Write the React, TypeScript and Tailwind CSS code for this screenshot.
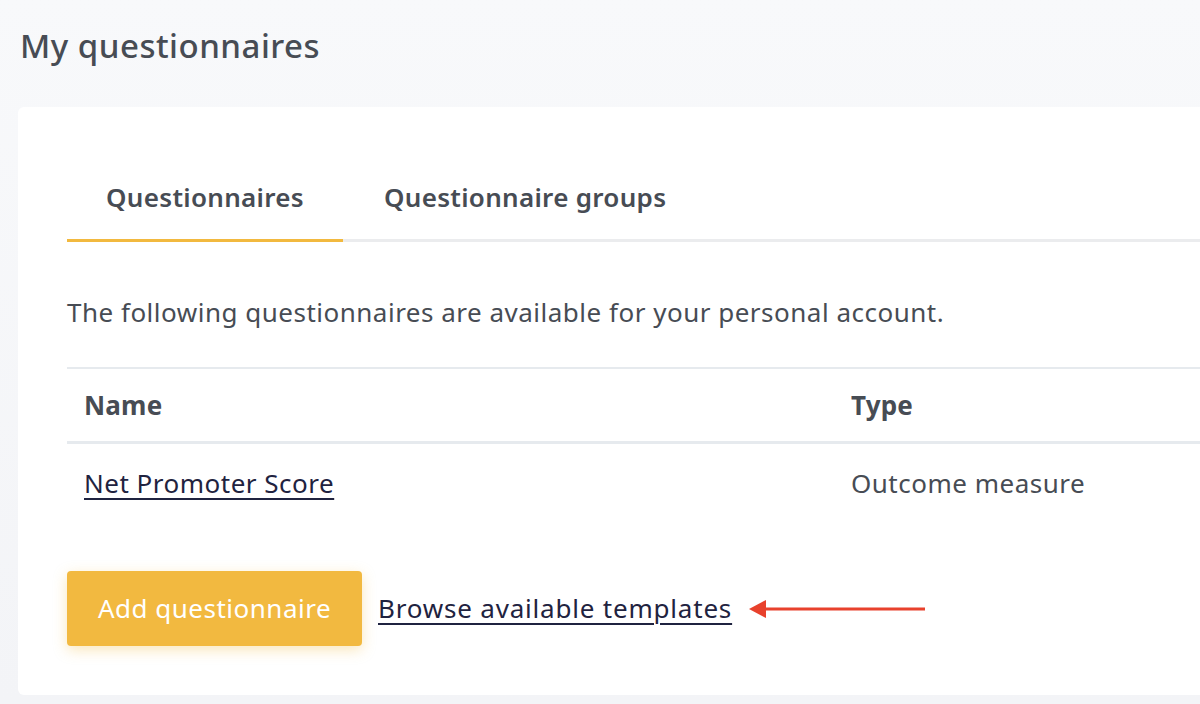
export default function App() {
  return (
    <div
      className="min-h-[704px] w-[1200px] overflow-hidden bg-gradient-to-b from-[#f8f9fb] to-[#f3f4f7] tracking-[0.5px] text-[#474c54]"
      style={{ fontFamily: '"Noto Sans", "Open Sans", sans-serif' }}
    >
      <h1 className="pl-5 pt-[24px] text-[33px] font-medium leading-[44px]">My questionnaires</h1>

      <div className="ml-[18px] mt-[39px] w-[1220px] rounded-md bg-white pb-[49px] pl-[49px] pt-[72px]">
        {/* Tabs */}
        <div className="flex border-b-[3px] border-[#ebecee] text-[26px] font-semibold leading-[36px] tracking-[0.3px]">
          <div className="-mb-[3px] w-[276px] border-b-[3px] border-[#f2b93f] pb-[24px] text-center">
            Questionnaires
          </div>
          <div className="pb-[24px] pl-[41px]">Questionnaire groups</div>
        </div>

        <p className="mt-[52px] text-[26px] leading-[36px]">
          The following questionnaires are available for your personal account.
        </p>

        {/* Table */}
        <div className="mt-[37px] border-t-2 border-[#e6eaee] text-[26px]">
          <div className="flex h-[75px] items-center border-b-[3px] border-[#e6eaee] font-bold tracking-[0.2px]">
            <div className="w-[784px] pl-[17px]">Name</div>
            <div>Type</div>
          </div>
          <div className="flex h-[78px] items-center">
            <div className="w-[784px] pl-[17px]">
              <a href="#" className="text-[#1f2340] underline decoration-[2px] underline-offset-[5px]">
                Net Promoter Score
              </a>
            </div>
            <div>Outcome measure</div>
          </div>
        </div>

        {/* Actions */}
        <div className="mt-[49px] flex items-center">
          <button className="h-[75px] w-[295px] rounded-[4px] bg-[#f2b940] text-[26px] text-white shadow-[0_4px_14px_rgba(242,185,64,0.35)]">
            Add questionnaire
          </button>
          <a
            href="#"
            className="ml-4 text-[26px] tracking-[0.8px] text-[#1f2340] underline decoration-[2px] underline-offset-[5px]"
          >
            Browse available templates
          </a>
          <svg width="176" height="20" viewBox="0 0 176 20" className="ml-[17px]">
            <line x1="14" y1="10" x2="176" y2="10" stroke="#e8412c" strokeWidth="3" />
            <polygon points="0,10 17,1 17,19" fill="#e8412c" />
          </svg>
        </div>
      </div>
    </div>
  );
}
